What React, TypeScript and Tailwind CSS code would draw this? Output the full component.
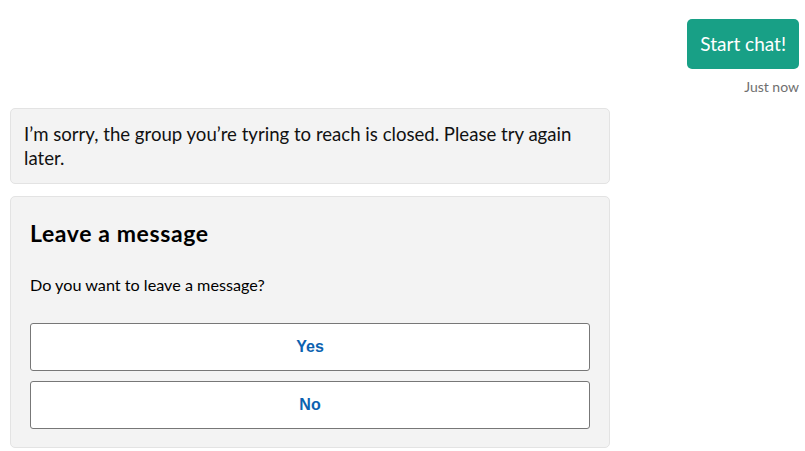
export default function App() {
  return (
    <div className="min-h-screen bg-white pl-[10px] pr-[6px] pt-[19px] font-['Lato',sans-serif]">
      {/* outgoing */}
      <div className="flex flex-col items-end">
        <button className="h-[50px] rounded-[5px] bg-[#18a086] px-[13px] text-[19px] text-white">
          Start chat!
        </button>
        <span className="mt-[8px] text-[14px] leading-[20px] text-[#6f6f6f]">Just now</span>
      </div>

      {/* incoming */}
      <div className="mt-[11px] w-[600px] rounded-[5px] border border-[#e3e3e3] bg-[#f3f3f3] px-[13px] py-[13px] text-[18.6px] leading-[24px] text-[#111]">
        I’m sorry, the group you’re tyring to reach is closed. Please try again later.
      </div>

      <div className="mt-[12px] w-[600px] rounded-[5px] border border-[#e3e3e3] bg-[#f3f3f3] px-[19px] pb-[18px] pt-[20px] text-black">
        <h2 className="text-[23px] font-bold leading-[32px] tracking-[0.6px]">Leave a message</h2>
        <p className="mt-[25px] text-[16.2px] leading-[22px]">Do you want to leave a message?</p>
        <div className="mt-[27px] flex flex-col gap-[10px]">
          <button className="h-[48px] rounded-[3px] border border-[#777] bg-white font-['Liberation_Sans',Arial,sans-serif] text-[16px] font-bold text-[#0b62b0]">
            Yes
          </button>
          <button className="h-[48px] rounded-[3px] border border-[#777] bg-white font-['Liberation_Sans',Arial,sans-serif] text-[16px] font-bold text-[#0b62b0]">
            No
          </button>
        </div>
      </div>
    </div>
  );
}
